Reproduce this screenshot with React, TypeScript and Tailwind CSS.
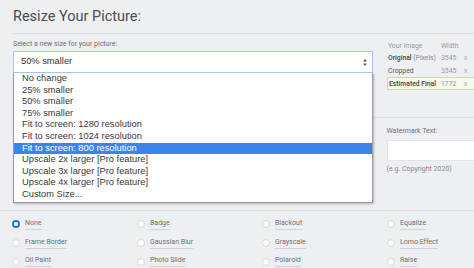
import React from 'react';

const sizeOptions = [
    'No change',
    '25% smaller',
    '50% smaller',
    '75% smaller',
    'Fit to screen: 1280 resolution',
    'Fit to screen: 1024 resolution',
    'Fit to screen: 800 resolution',
    'Upscale 2x larger [Pro feature]',
    'Upscale 3x larger [Pro feature]',
    'Upscale 4x larger [Pro feature]',
    'Custom Size...',
];

const effects = [
    'None', 'Badge', 'Blackout', 'Equalize',
    'Frame Border', 'Gaussian Blur', 'Grayscale', 'Lomo Effect',
    'Oil Paint', 'Photo Slide', 'Polaroid', 'Raise',
];

function Radio({ label, checked }: { label: string; checked?: boolean }) {
    return (
        <div className="flex items-center gap-[5px] h-[18.7px]">
            <span
                className={`w-[8px] h-[8px] rounded-full bg-white shrink-0 ${
                    checked ? 'border-[2.5px] border-[#2d6fd8]' : 'border border-[#d8dade]'
                }`}
            />
            <span className="text-[7px] leading-[9px] text-[#6f6f6f] border-b border-[#cfd2d7] pb-[1px]">
                {label}
            </span>
        </div>
    );
}

export default function App() {
    return (
        <div
            className="w-[474px] h-[268px] overflow-hidden bg-[#edeff2] relative"
            style={{ fontFamily: 'Roboto, "Liberation Sans", sans-serif' }}
        >
            {/* Title */}
            <div className="h-[33px] pt-[7px] pl-[13px]">
                <h1 className="text-[14.5px] leading-[20px] text-[#4d4d4d] whitespace-nowrap">Resize Your Picture:</h1>
            </div>
            <div className="ml-[13px] border-t border-[#dcdee2]" />

            {/* Main form area */}
            <div className="flex h-[176px] pl-[13px]">
                <div className="w-[360px] shrink-0 pt-[6px]">
                    <div className="text-[7px] leading-[9px] text-[#707070] mb-[2px] whitespace-nowrap">
                        Select a new size for your picture:
                    </div>
                    <div className="relative">
                        <div className="h-[22px] bg-white border border-[#a9c6ef] flex items-center justify-between pl-[7px] pr-[5px]">
                            <span
                                className="text-[9.3px] text-[#333]"
                                style={{ fontFamily: '"Liberation Sans", Arial, sans-serif' }}
                            >
                                50% smaller
                            </span>
                            <svg width="4" height="7" viewBox="0 0 4 7">
                                <path d="M2 0 L4 2.6 H0 Z M2 7 L4 4.4 H0 Z" fill="#555" />
                            </svg>
                        </div>
                        {/* Native-like dropdown list */}
                        <div
                            className="absolute left-0 top-[22px] w-[360px] bg-white border border-t-0 border-[#9c9c9c] shadow-[1px_1px_2px_rgba(0,0,0,0.25)] z-10 pb-[1px]"
                            style={{ fontFamily: '"Liberation Sans", Arial, sans-serif' }}
                        >
                            {sizeOptions.map((opt) => (
                                <div
                                    key={opt}
                                    className={`h-[11.6px] leading-[11.6px] text-[9.3px] pl-[8px] whitespace-nowrap ${
                                        opt === 'Fit to screen: 800 resolution'
                                            ? 'bg-[#3b84ee] text-white'
                                            : 'text-[#3a3a3a]'
                                    }`}
                                >
                                    {opt}
                                </div>
                            ))}
                        </div>
                    </div>
                </div>

                {/* Right side panel */}
                <div className="flex-1 min-w-0">
                    <div className="pl-[13.5px] pt-[5.75px] text-[6.8px] whitespace-nowrap">
                        <div className="flex h-[12.5px] items-center text-[#9a9a9a]">
                            <span className="w-[54.5px] shrink-0 pl-[1.5px]">Your Image</span>
                            <span>Width</span>
                        </div>
                        <div className="flex h-[12.5px] items-center">
                            <span className="w-[54.5px] shrink-0 pl-[1.5px] text-[#444]">
                                <span className="font-medium">Original</span>{' '}
                                <span className="text-[#8a8a8a]">(Pixels)</span>
                            </span>
                            <span className="w-[23px] shrink-0 text-[#9a9a9a]">3545</span>
                            <span className="text-[#aaa]">x</span>
                        </div>
                        <div className="flex h-[12.5px] items-center">
                            <span className="w-[54.5px] shrink-0 pl-[1.5px] text-[#555]">Cropped</span>
                            <span className="w-[23px] shrink-0 text-[#9a9a9a]">3545</span>
                            <span className="text-[#aaa]">x</span>
                        </div>
                        <div className="flex h-[13px] items-center bg-[#f5f9ee] border border-r-0 border-[#c8dca6]">
                            <span className="w-[53.5px] shrink-0 pl-[1.5px] text-[#444] font-medium">Estimated Final</span>
                            <span className="w-[23px] shrink-0 text-[#9a9a9a]">1772</span>
                            <span className="text-[#aaa]">x</span>
                        </div>
                    </div>
                    <div className="mt-[27px] border-t border-[#dcdee2]" />
                    <div className="pl-[13.5px] pt-[9px]">
                        <div className="text-[7px] leading-[9px] text-[#707070] whitespace-nowrap">Watermark Text:</div>
                        <div className="mt-[4px] h-[21px] bg-white border border-r-0 border-[#e2e4e8]" />
                        <div className="mt-[4px] text-[7px] leading-[9px] text-[#8a8a8a] whitespace-nowrap">
                            (e.g. Copyright 2020)
                        </div>
                    </div>
                </div>
            </div>

            <div className="border-t border-[#dcdee2]" />

            {/* Effects */}
            <div className="grid grid-cols-[125px_125px_125px_125px] pl-[12px] pt-[4px]">
                {effects.map((e) => (
                    <Radio key={e} label={e} checked={e === 'None'} />
                ))}
            </div>
        </div>
    );
}
